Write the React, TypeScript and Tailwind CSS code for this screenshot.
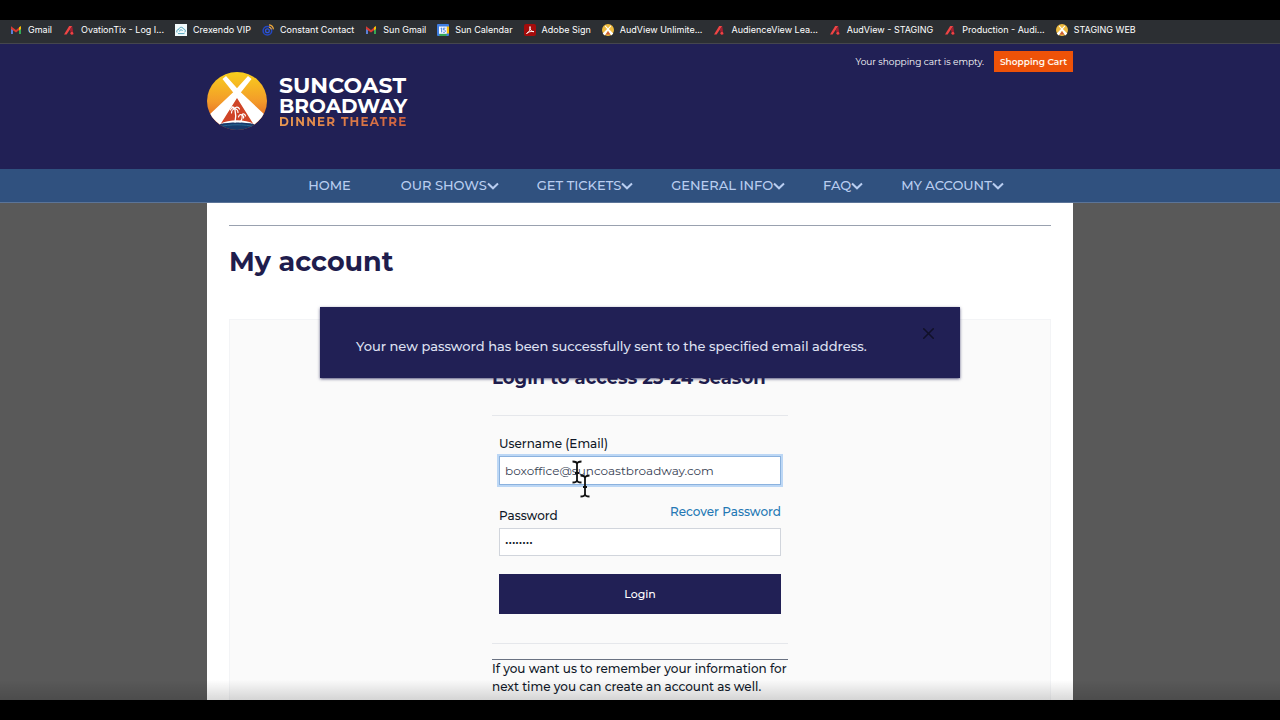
import React, { useState } from 'react';
import { X } from 'lucide-react';

interface Bookmark {
  label: string;
  icon: () => React.ReactElement;
}

interface NavItem {
  label: string;
  href: string;
  hasMenu: boolean;
}

const GmailIcon = () => (
  <svg viewBox="0 0 12 12" className="w-3 h-3 shrink-0" aria-hidden="true">
    <path d="M1 2.5v7.5h2V5z" fill="#5a7fd6" />
    <path d="M11 2.5v7.5H9V5z" fill="#34a853" />
    <path d="M9 3.2 11 2v3L9 6.4z" fill="#fbbc04" />
    <path d="M1 2.2 6 6l3-2.6V6.2L6 8.6 1 5z" fill="#d93a30" />
  </svg>
);

const AudienceIcon = () => (
  <svg viewBox="0 0 12 12" className="w-3 h-3 shrink-0" aria-hidden="true">
    <path d="M1 10.5 6.2 2h3L3.6 10.5z" fill="#ef4444" />
    <path d="M9.2 2l1.300 8.500H8.500L6.800 6z" fill="#a31f30" />
    <circle cx="8.800" cy="9.300" r="1.400" fill="#ef4444" />
  </svg>
);

const CloudIcon = () => (
  <svg viewBox="0 0 12 12" className="w-3 h-3 shrink-0" aria-hidden="true">
    <rect width="12" height="12" fill="#f2fafc" />
    <path
      d="M2 8.5c-1-2 .6-3.200 1.700-2.900C4 3 7.500 2.300 8.500 5c1.800 0 2.400 2 1.200 3.300M3 9.600h6.500M4.300 7.500c.5-2 2.500-2.200 3.200-.8"
      fill="none"
      stroke="#3f9bb5"
      strokeWidth="0.9"
    />
  </svg>
);

const ConstantIcon = () => (
  <svg viewBox="0 0 12 12" className="w-3 h-3 shrink-0" aria-hidden="true">
    <circle cx="5.400" cy="6.800" r="4.300" fill="none" stroke="#2447c4" strokeWidth="1.500" />
    <circle cx="5.400" cy="6.800" r="1.900" fill="none" stroke="#2f57d9" strokeWidth="1.300" />
    <path d="M7 .8a5 5 0 0 1 4.400 4.600M7 3a3 3 0 0 1 2.400 2.400" fill="none" stroke="#f0a93a" strokeWidth="1.200" />
  </svg>
);

const CalendarIcon = () => (
  <svg viewBox="0 0 12 12" className="w-3 h-3 shrink-0" aria-hidden="true">
    <rect width="12" height="12" rx="1" fill="#3f7de0" />
    <rect x="9.500" y="2.500" width="2.500" height="7" fill="#fbbc04" />
    <rect x="2.500" y="9.500" width="7" height="2.500" fill="#34a853" />
    <rect x="2" y="2.500" width="7.800" height="7.300" fill="#f4f8ff" />
    <path d="M3.600 4.600 4.600 4v4.400M8.400 4.200H6.400v1.700c2.700-.4 2.500 2.500.6 2.500-.5 0-.9-.2-1.100-.5" fill="none" stroke="#3f7de0" strokeWidth="0.9" />
  </svg>
);

const AdobeIcon = () => (
  <svg viewBox="0 0 12 12" className="w-3 h-3 shrink-0" aria-hidden="true">
    <rect width="12" height="12" rx="2" fill="#a30b0b" />
    <path d="M2.500 9.500C5 8.500 6.600 5.500 6 2.500c-.6 3 1.200 5.200 4 5.200C7 7 4.500 7.800 2.500 9.500z" fill="none" stroke="#fff" strokeWidth="0.9" />
  </svg>
);

const SunIcon = () => (
  <svg viewBox="0 0 12 12" className="w-3 h-3 shrink-0" aria-hidden="true">
    <circle cx="6" cy="6" r="6" fill="#eebb3f" />
    <path d="M3.400 1.600 6 4.200l2.600-2.600.6.600L6.900 5.100l4.400 4.400-2 1.900L6 6.800l-3.300 4.600-2-1.900 4.400-4.400-2.300-2.900z" fill="#fff" />
    <path d="M6 7.300 8.300 10.500H3.700z" fill="#c8553d" />
  </svg>
);

const bookmarks: Bookmark[] = [
  { label: 'Gmail', icon: GmailIcon },
  { label: 'OvationTix - Log I...', icon: AudienceIcon },
  { label: 'Crexendo VIP', icon: CloudIcon },
  { label: 'Constant Contact', icon: ConstantIcon },
  { label: 'Sun Gmail', icon: GmailIcon },
  { label: 'Sun Calendar', icon: CalendarIcon },
  { label: 'Adobe Sign', icon: AdobeIcon },
  { label: 'AudView Unlimite...', icon: SunIcon },
  { label: 'AudienceView Lea...', icon: AudienceIcon },
  { label: 'AudView - STAGING', icon: AudienceIcon },
  { label: 'Production - Audi...', icon: AudienceIcon },
  { label: 'STAGING WEB', icon: SunIcon }
];

const navItems: NavItem[] = [
  { label: 'HOME', href: '#home', hasMenu: false },
  { label: 'OUR SHOWS', href: '#shows', hasMenu: true },
  { label: 'GET TICKETS', href: '#tickets', hasMenu: true },
  { label: 'GENERAL INFO', href: '#info', hasMenu: true },
  { label: 'FAQ', href: '#faq', hasMenu: true },
  { label: 'MY ACCOUNT', href: '#account', hasMenu: true }
];

function BookmarksBar() {
  return (
    <nav
      aria-label="Bookmarks"
      className="flex items-start gap-[11px] h-6 pt-[3px] px-[10px] bg-[#2c2f33] border-b border-[#45464d] overflow-hidden font-['Inter',sans-serif]"
    >
      {bookmarks.map((bookmark, index) => {
        const Icon = bookmark.icon;
        return (
          <a
            key={index}
            href="#bookmark"
            className="flex items-center gap-[6px] text-[9px] leading-[14px] text-white whitespace-nowrap"
          >
            <Icon />
            {bookmark.label}
          </a>
        );
      })}
    </nav>
  );
}

function LogoMark() {
  return (
    <svg viewBox="0 0 60 60" className="w-[60px] h-[60px]" aria-hidden="true">
      <defs>
        <linearGradient id="sky" x1="0" y1="0" x2="0" y2="1">
          <stop offset="0" stopColor="#f8cf1c" />
          <stop offset="0.5" stopColor="#f39a2a" />
          <stop offset="1" stopColor="#d8431f" />
        </linearGradient>
        <clipPath id="disc">
          <ellipse cx="30" cy="29" rx="30" ry="29" />
        </clipPath>
      </defs>
      <g clipPath="url(#disc)">
        <rect width="60" height="60" fill="url(#sky)" />
        <path d="M30 25 47 53H13z" fill="#cf4427" />
        <path d="M15.500 7 19 4 33 19.500 58 43 47 53 30 26 27 21.500z" fill="#fff" />
        <path d="M44.500 7 41 4 27 19.500 2 43 13 53 30 26 33 21.500z" fill="#fff" />
        <path d="M12 53c8-5 28-5 36 0v8H12z" fill="#173a6b" />
        <path d="M13 52c9-5 25-5 34 0-9-2-25-2-34 0z" fill="#fff" />
        <path d="M12 55c10-3 26-3 36 0" fill="none" stroke="#2a6b94" strokeWidth="1" />
      </g>
      <g fill="none" stroke="#fff" strokeLinecap="round">
        <path d="M28 50c1-4 1-8 0-12" strokeWidth="1.300" />
        <path d="M28 37c-2-2-4-1-4.500 1M28 37c-2 0-3.500 2-3.500 4M28 37c0-2 3-3 4.500 0M28 37c2 0 3 2 3 3.500M28 37c-1-2-2-2.500-3.500-2" strokeWidth="1.200" />
        <path d="M33 50c2-2 2.500-4 2-7" strokeWidth="1.100" />
        <path d="M35 43c-2-1-3 0-3.500 2M35 43c1-2 3-1 3.500 1M35 43c1.500 1 2 2 1.500 3" strokeWidth="1.200" />
      </g>
    </svg>
  );
}

function Header() {
  return (
    <header className="bg-[#212055]">
      <div className="flex items-start justify-between max-w-[866px] mx-auto h-[125px] pt-[7px]">
        <a href="#home" className="flex items-center gap-3 pt-[21px]">
          <LogoMark />
          <span className="flex flex-col font-bold">
            <span className="text-[22px] leading-5 text-white">SUNCOAST</span>
            <span className="text-[20px] leading-5 text-white">BROADWAY</span>
            <span className="text-[12px] leading-3 tracking-widest bg-gradient-to-r from-[#e99a52] to-[#cf6040] bg-clip-text text-transparent">
              DINNER THEATRE
            </span>
          </span>
        </a>
        <div className="flex items-center gap-[10px] text-[9px]">
          <span className="text-white">Your shopping cart is empty.</span>
          <button className="h-[21px] px-[6px] bg-[#ee5208] font-semibold text-orange-50 cursor-pointer">
            Shopping Cart
          </button>
        </div>
      </div>
    </header>
  );
}

function MainNav() {
  return (
    <nav aria-label="Main" className="bg-[#30517f] border-b border-[#5b7498]">
      <ul className="flex items-center justify-center gap-[38px] h-[33px] pl-8 text-[13px] font-medium text-[#b9cdf0]">
        {navItems.map((item) => (
          <li key={item.label} className="first:mr-3">
            <a href={item.href} className="flex items-center whitespace-nowrap">
              {item.label}
              {item.hasMenu && (
                <svg viewBox="0 0 12 8" className="w-3 h-2" aria-hidden="true">
                  <path d="M1 1.500 6 6.300l5-4.800" fill="none" stroke="currentColor" strokeWidth="2" />
                </svg>
              )}
            </a>
          </li>
        ))}
      </ul>
    </nav>
  );
}

function TextCursor() {
  return (
    <svg viewBox="0 0 12 24" className="w-3 h-6" aria-hidden="true">
      <path
        d="M1.500 1.500c2.500 0 4.500.6 4.500 2.500 0-1.900 2-2.500 4.500-2.500M6 4v16M1.500 22.500c2.500 0 4.500-.6 4.500-2.500 0 1.900 2 2.500 4.500 2.500M4 13h4"
        fill="none"
        stroke="#111"
        strokeWidth="1.800"
      />
    </svg>
  );
}

function LoginForm() {
  const [email, setEmail] = useState('boxoffice@suncoastbroadway.com');
  const [password, setPassword] = useState('password');

  return (
    <form onSubmit={(e) => e.preventDefault()} className="px-[7px] pt-[18px] pb-[29px] text-[12px]">
      <label htmlFor="email" className="block leading-5 font-medium text-gray-900">
        Username (Email)
      </label>
      <div className="relative mt-[2px]">
        <input
          id="email"
          type="text"
          value={email}
          onChange={(e) => setEmail(e.target.value)}
          className="block w-full h-[29px] px-[5px] pb-px bg-white border border-[#8bb2de] ring-2 ring-[#bcd7f5] text-[12px] text-gray-700 outline-none"
        />
        <div className="absolute left-[72px] top-1 pointer-events-none">
          <TextCursor />
        </div>
        <div className="absolute left-20 top-[18px] pointer-events-none">
          <TextCursor />
        </div>
      </div>
      <div className="flex items-start justify-between mt-[17px] font-medium">
        <label htmlFor="password" className="pt-1 leading-5 text-gray-900">
          Password
        </label>
        <a href="#recover" className="leading-5 text-[#2478b4]">
          Recover Password
        </a>
      </div>
      <input
        id="password"
        type="password"
        value={password}
        onChange={(e) => setPassword(e.target.value)}
        className="block w-full h-7 mt-[2px] px-[5px] bg-white border border-gray-300 text-[11px] font-medium text-gray-900 outline-none"
      />
      <button
        type="submit"
        className="block w-full h-10 mt-[18px] bg-[#212055] text-[11px] font-medium text-white cursor-pointer"
      >
        Login
      </button>
    </form>
  );
}

function Notice({ onClose }: { onClose: () => void }) {
  return (
    <div
      role="alert"
      className="absolute left-1/4 top-[104px] w-1/2 h-[71px] pl-9 pr-[22px] pt-[17px] flex items-start justify-between bg-[#212055] shadow-sm shadow-[#212055]/60"
    >
      <p className="pt-3 text-[13px] leading-5 font-medium text-[#dfe0f2]">
        Your new password has been successfully sent to the specified email address.
      </p>
      <button onClick={onClose} aria-label="Close" className="text-[#111128] cursor-pointer">
        <X size={19} strokeWidth={2} />
      </button>
    </div>
  );
}

export default function App() {
  const [showNotice, setShowNotice] = useState(true);

  return (
    <div className="flex flex-col h-screen py-5 bg-black font-['Montserrat','Inter',sans-serif]">
      <BookmarksBar />
      <Header />
      <MainNav />

      <div className="relative flex-1 min-h-0 overflow-hidden bg-[#595959]">
        <main className="max-w-[866px] min-h-full mx-auto px-[22px] pt-[22px] bg-white">
          <hr className="border-gray-400" />
          <h1 className="mt-4 text-[27px] leading-10 font-bold text-[#1f1d4d]">My account</h1>

          <section className="mt-[37px] pt-[46px] pb-10 bg-[#fafafa] border border-gray-100">
            <div className="w-[296px] mx-auto">
              <h2 className="text-[18px] leading-6 font-bold text-[#1f1d4d] whitespace-nowrap">
                Login to access 23-24 Season
              </h2>
              <hr className="mt-[25px] border-gray-200" />
              <LoginForm />
              <hr className="border-gray-200" />
              <hr className="mt-[15px] border-gray-500" />
              <p className="text-[12px] leading-[18px] font-medium text-gray-900">
                If you want us to remember your information for next time you can create an account as well.
              </p>
            </div>
          </section>
        </main>

        {showNotice && <Notice onClose={() => setShowNotice(false)} />}

        {/* Fade above the bottom edge */}
        <div className="absolute inset-x-0 bottom-0 h-5 bg-gradient-to-t from-black/15 to-transparent pointer-events-none" />
      </div>
    </div>
  );
}
